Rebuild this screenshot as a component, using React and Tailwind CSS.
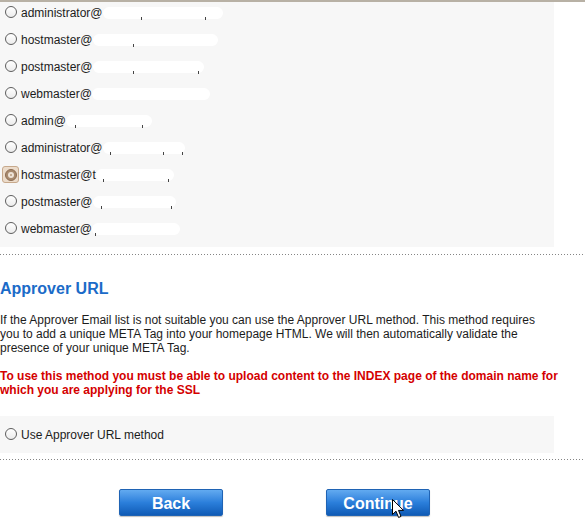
import React from 'react';

const emails = [
  { name: 'administrator@', blob: 120, marks: [38, 102] },
  { name: 'hostmaster@', blob: 125, marks: [40] },
  { name: 'postmaster@', blob: 111, marks: [40, 105] },
  { name: 'webmaster@', blob: 118, marks: [] },
  { name: 'admin@', blob: 86, marks: [9, 76] },
  { name: 'administrator@', blob: 82, marks: [7, 60, 79] },
  { name: 'hostmaster@t', blob: 78, marks: [7, 72], checked: true },
  { name: 'postmaster@', blob: 83, marks: [8, 78] },
  { name: 'webmaster@', blob: 88, marks: [3] },
];

const Radio = ({ checked }) => {
  if (checked) {
    return (
      <span className="-ml-[3px] mr-[2px] flex h-[17px] w-[17px] items-center justify-center rounded-[3px] border border-[#c7a98c] bg-[#ecdccb]">
        <span className="flex h-[12px] w-[12px] items-center justify-center rounded-full border border-[#8c6c52] bg-[#a88a6e]">
          <span className="flex h-[6px] w-[6px] items-center justify-center rounded-full bg-[#efe4d8]">
            <span className="h-[2px] w-[2px] rounded-full bg-[#b89c80]" />
          </span>
        </span>
      </span>
    );
  }
  return <span className="mr-[4px] -mt-[2px] h-[12px] w-[12px] rounded-full border border-[#5e5e5e] bg-gradient-to-b from-white to-[#ececec]" />;
};

const Dotted = () => (
  <div className="h-px w-full bg-[repeating-linear-gradient(90deg,#858585_0_1px,transparent_1px_3px)]" />
);

const BlueButton = ({ children }) => (
  <button className="h-[27px] w-[104px] rounded-[2px] border border-[#1f63b4] bg-gradient-to-b from-[#62aaf0] via-[#2b7fdb] to-[#0f5bb6] pt-[2px] text-[16px] font-bold leading-none text-white shadow-[0_1px_1px_rgba(0,0,0,0.25)]">
    {children}
  </button>
);

export default function App() {
  return (
    <div className="relative h-[530px] w-[585px] overflow-hidden bg-white font-['Liberation_Sans',Arial,sans-serif] text-[12px] text-[#1c1c1c]">
      <div className="relative z-10 h-[2px] bg-[#b8b1a5]" />

      {/* approver email list */}
      <div className="w-[554px] bg-[#f7f7f7] pb-[5px]">
        <div className="-mt-[3px]">
          {emails.map((e, i) => (
            <label key={i} className="flex h-[27px] items-center pl-[5px]">
              <Radio checked={e.checked} />
              <span>{e.name}</span>
              <span className="relative h-[12px] rounded-full bg-white" style={{ width: e.blob }}>
                {e.marks.map((m) => (
                  <span key={m} className="absolute -bottom-[1px] h-[3px] w-[1px] bg-[#444]" style={{ left: m }} />
                ))}
              </span>
            </label>
          ))}
        </div>
      </div>

      <div className="mt-[7px]">
        <Dotted />
      </div>

      <h2 className="mt-[24px] text-[16px] font-bold leading-[20px] text-[#1b6bc8]">Approver URL</h2>

      <p className="mt-[14px] leading-[14px]">
        If the Approver Email list is not suitable you can use the Approver URL method. This method requires
        <br />
        you to add a unique META Tag into your homepage HTML. We will then automatically validate the
        <br />
        presence of your unique META Tag.
      </p>

      <p className="mt-[14px] font-bold leading-[14px] text-[#d40000]">
        To use this method you must be able to upload content to the INDEX page of the domain name for
        <br />
        which you are applying for the SSL
      </p>

      <div className="mt-[19px] flex h-[37px] w-[554px] items-center bg-[#f7f7f7] pl-[5px]">
        <Radio />
        <span>Use Approver URL method</span>
      </div>

      <div className="mt-[6px]">
        <Dotted />
      </div>

      <div className="mt-[29px] flex gap-[103px] pl-[119px]">
        <BlueButton>Back</BlueButton>
        <BlueButton>Continue</BlueButton>
      </div>

      {/* mouse pointer */}
      <svg className="absolute left-[392px] top-[499px]" width="13" height="20" viewBox="0 0 13 20">
        <path d="M0.5 0.5 L0.5 15.5 L4 12.2 L6.6 18.5 L9 17.4 L6.5 11.4 L11.5 11.4 Z" fill="#fff" stroke="#000" strokeWidth="1" strokeLinejoin="round" />
      </svg>
    </div>
  );
}
